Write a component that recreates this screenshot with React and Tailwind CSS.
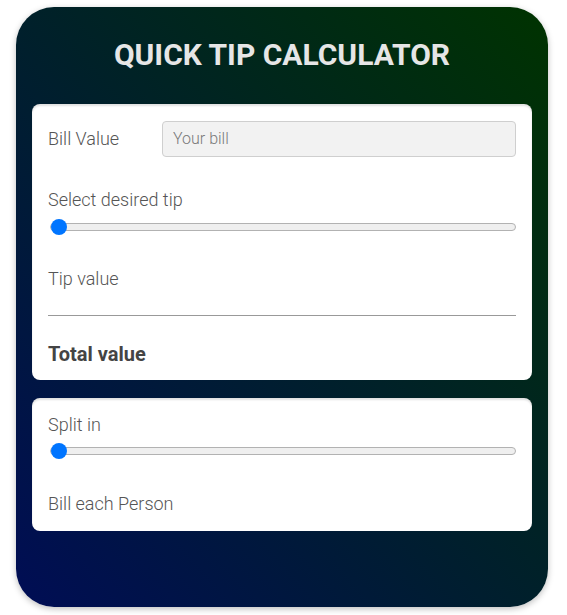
import { useState } from 'react';

const rangeClass =
  "ml-[2px] block h-2 w-[calc(100%-2px)] cursor-pointer appearance-none rounded-full border border-[#b2b2b2] bg-[#efefef] outline-none [&::-webkit-slider-thumb]:h-4 [&::-webkit-slider-thumb]:w-4 [&::-webkit-slider-thumb]:appearance-none [&::-webkit-slider-thumb]:rounded-full [&::-webkit-slider-thumb]:bg-[#0075ff]";

const App = () => {
  const [bill, setBill] = useState('');
  const [tip, setTip] = useState(0);
  const [split, setSplit] = useState(1);

  return (
    <div className="min-h-[615px] bg-white pt-[7px] pl-4 font-['Roboto',sans-serif]">
      <div className="flex h-[600px] w-[532px] flex-col rounded-[38px] bg-[linear-gradient(to_top_right,#000d55,#003300)] px-4 shadow-[0_2px_6px_rgba(0,0,0,0.25)]">
        {/* Title */}
        <h1 className="mt-[30px] mb-[31px] text-center text-[30px] font-bold leading-9 text-[#e6e6e6]">
          QUICK TIP CALCULATOR
        </h1>

        {/* Bill + tip card */}
        <div className="rounded-lg bg-white px-4 pt-4 pb-[14px] shadow-[inset_0_2px_2px_rgba(0,0,0,0.12)]">
          <div className="flex h-[37px] items-center">
            <label className="w-[114px] text-lg font-light text-[#555]">Bill Value</label>
            <input
              type="text"
              value={bill}
              onChange={(e) => setBill(e.target.value)}
              placeholder="Your bill"
              className="h-9 flex-1 rounded border border-[#cfcfcf] bg-[#f2f2f2] px-[10px] text-base font-light text-[#555] outline-none placeholder:text-[#7a7a7a]"
            />
          </div>

          <p className="mt-[31px] text-lg font-light leading-6 text-[#555]">Select desired tip</p>
          <input
            type="range"
            min="0"
            max="30"
            value={tip}
            onChange={(e) => setTip(e.target.value)}
            className={`mt-[11px] ${rangeClass}`}
          />

          <p className="mt-[36px] text-lg font-light leading-6 text-[#555]">Tip value</p>
          <hr className="mt-6 border-t border-[#999]" />
          <p className="mt-[26px] text-xl font-bold leading-6 text-[#444]">Total value</p>
        </div>

        {/* Split card */}
        <div className="mt-[18px] rounded-lg bg-white px-4 pt-[15px] pb-[15px] shadow-[inset_0_2px_2px_rgba(0,0,0,0.12)]">
          <p className="text-lg font-light leading-6 text-[#555]">Split in</p>
          <input
            type="range"
            min="1"
            max="20"
            value={split}
            onChange={(e) => setSplit(e.target.value)}
            className={`mt-[10px] ${rangeClass}`}
          />
          <p className="mt-[37px] text-lg font-light leading-6 text-[#555]">Bill each Person</p>
        </div>
      </div>
    </div>
  );
};

export default App;
